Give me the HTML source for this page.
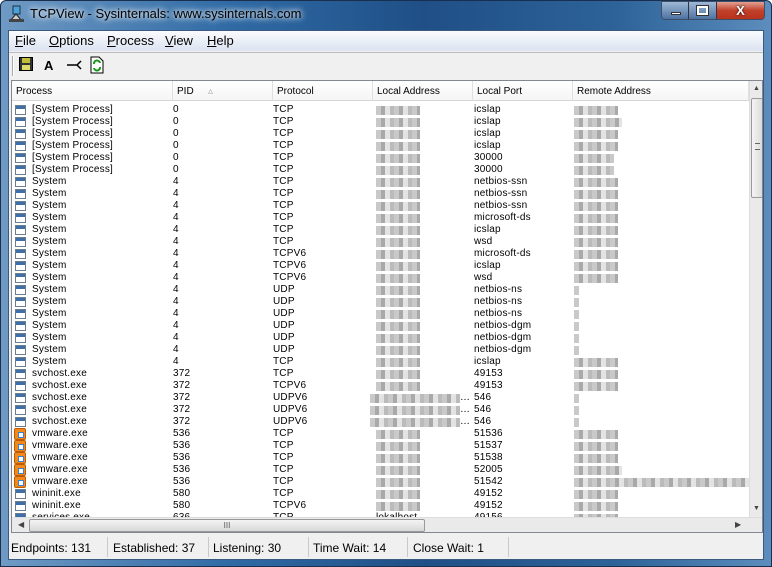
<!DOCTYPE html>
<html><head><meta charset="utf-8"><style>
*{margin:0;padding:0;box-sizing:border-box}
body{width:772px;height:567px;overflow:hidden;font-family:"Liberation Sans",sans-serif;background:#fff;position:relative}
.frame{position:absolute;left:0;top:0;width:772px;height:567px;background:linear-gradient(90deg,#6f9ac4 0%,#2f6aa5 30%,#1f4f86 55%,#2d6399 80%,#5c8dbd 100%);border:1px solid #1a2f4d;border-radius:6px 6px 0 0}
.title{position:absolute;left:30px;top:6px;font-size:13px;color:#000;text-shadow:0 0 8px #fff,0 0 6px #fff}
.btns{position:absolute;left:661px;top:1px;width:104px;height:19px;border:1px solid #3a4e6a;border-radius:0 0 4px 4px;overflow:hidden;display:flex}
.btns div{height:100%}
.client{position:absolute;left:8px;top:30px;width:756px;height:530px;background:#f0f0f0;border:1px solid #3c5a80}
.menu{position:absolute;left:0;top:0;width:754px;height:20px;background:linear-gradient(#fafbfd,#dbe3f1);font-size:13px}
.menu span{position:absolute;top:2px}
.tb{position:absolute;left:0;top:21px;width:754px;height:26px;border-top:1px solid #bbb;background:#f0f0f0}
.list{position:absolute;left:2px;top:49px;width:752px;height:453px;background:#fff;border:1px solid #828790;overflow:hidden}
.hdr{position:absolute;left:0;top:0;width:737px;height:20px;background:linear-gradient(#fff,#f5f5f5);border-bottom:1px solid #d5d5d5;font-size:10px;z-index:2}
.hdr span{position:absolute;top:5px}
.hdr i{position:absolute;top:0;width:1px;height:20px;background:#e0e0e0}
.r{position:absolute;left:0;width:737px;height:12px;font-size:10px;line-height:12px;letter-spacing:.2px;margin-top:3px}
.r span{position:absolute;top:0;white-space:nowrap}
.ic{position:absolute;left:3px;top:1px;width:11px;height:10px;border:1px solid #6b7c8f;background:linear-gradient(#3e6fa8 0 3px,#fff 3px)}
.vm{position:absolute;left:2px;top:0;width:12px;height:12px;border-radius:2px;background:#f08a1c;border:1px solid #c05a00}
.vm:after{content:"";position:absolute;left:3px;top:3px;width:4px;height:4px;background:#fff;border:1px solid #3a7fd0}
.b{position:absolute;top:2px;height:9px;background:repeating-linear-gradient(90deg,#c9c9c9 0 5px,#a9a9a9 5px 9px,#e3e3e3 9px 14px,#bbb 14px 18px)}
.vs{position:absolute;left:737px;top:0;width:15px;height:436px;background:#eaeaea;border-left:1px solid #ddd;z-index:3}
.hs{position:absolute;left:0;top:436px;width:752px;height:16px;background:#eaeaea;border-top:1px solid #ddd;z-index:3}
.status{position:absolute;left:0;top:504px;width:754px;height:24px;font-size:12px}
.status span{position:absolute;top:6px}
.status i{position:absolute;top:2px;width:1px;height:20px;background:#c9c9c9}
</style></head><body>
<div class="frame"></div>
<svg style="position:absolute;left:8px;top:5px" width="18" height="18"><rect x="5" y="1" width="7" height="8" fill="#4aa3d8" stroke="#234" stroke-width="1"/><path d="M2 16 L8 9 L14 16 Z" fill="#ccc" stroke="#222"/><rect x="1" y="14" width="15" height="3" fill="#444"/></svg>
<div class="title">TCPView - Sysinternals: www.sysinternals.com</div>
<div class="btns"><div style="width:28px;background:linear-gradient(#9fb8d6,#4e73a2);border-right:1px solid #334;position:relative"><b style="position:absolute;left:9px;top:10px;width:10px;height:3px;background:#fff;border:1px solid #333"></b></div><div style="width:28px;background:linear-gradient(#9fb8d6,#4e73a2);border-right:1px solid #334;position:relative"><b style="position:absolute;left:8px;top:4px;width:11px;height:9px;border:2px solid #fff;outline:1px solid #333"></b></div><div style="width:48px;background:linear-gradient(#e4a294,#c2402a 50%,#b8321c);color:#fff;font-weight:bold;font-size:13px;text-align:center;line-height:18px;text-shadow:0 0 2px #000">X</div></div>
<div class="client">
<div class="menu"><span style="left:6px"><u>F</u>ile</span><span style="left:40px"><u>O</u>ptions</span><span style="left:98px"><u>P</u>rocess</span><span style="left:156px"><u>V</u>iew</span><span style="left:198px"><u>H</u>elp</span></div>
<div class="tb">
<div style="position:absolute;left:3px;top:3px;width:2px;height:20px;border-left:1px solid #aaa;border-right:1px solid #fff"></div>
<svg style="position:absolute;left:10px;top:4px" width="14" height="14"><rect x="0.5" y="0.5" width="13" height="13" fill="#333" stroke="#000"/><rect x="3" y="1" width="8" height="5" fill="#bfbf3a"/><rect x="3" y="8" width="8" height="5" fill="#dcdc6a"/></svg>
<div style="position:absolute;left:35px;top:5px;font-weight:bold;font-size:13px">A</div>
<svg style="position:absolute;left:57px;top:6px" width="16" height="12"><path d="M1 6 H11 M11 6 L15 2 M11 6 L15 10" stroke="#000" stroke-width="1.5" fill="none"/></svg>
<svg style="position:absolute;left:81px;top:3px" width="14" height="18"><path d="M1 1 H9 L13 5 V17 H1 Z" fill="#fff" stroke="#000"/><path d="M4 8 A3 3 0 0 1 10 7 M10 11 A3 3 0 0 1 4 12" stroke="#1a9a1a" stroke-width="2" fill="none"/></svg>
</div>
<div class="list">
<div class="hdr"><span style="left:4px">Process</span><i style="left:160px"></i><span style="left:165px">PID</span><span style="left:196px;color:#aaa">▵</span><i style="left:260px"></i><span style="left:265px">Protocol</span><i style="left:360px"></i><span style="left:365px">Local Address</span><i style="left:460px"></i><span style="left:465px">Local Port</span><i style="left:560px"></i><span style="left:565px">Remote Address</span><i style="left:736px"></i></div>
<div class="r" style="top:20px"><i class="ic"></i><span style="left:20px">[System Process]</span><span style="left:161px">0</span><span style="left:261px">TCP</span><b class="b" style="left:364px;width:44px"></b><span style="left:462px">icslap</span><b class="b" style="left:562px;width:44px"></b></div>
<div class="r" style="top:32px"><i class="ic"></i><span style="left:20px">[System Process]</span><span style="left:161px">0</span><span style="left:261px">TCP</span><b class="b" style="left:364px;width:44px"></b><span style="left:462px">icslap</span><b class="b" style="left:562px;width:48px"></b></div>
<div class="r" style="top:44px"><i class="ic"></i><span style="left:20px">[System Process]</span><span style="left:161px">0</span><span style="left:261px">TCP</span><b class="b" style="left:364px;width:44px"></b><span style="left:462px">icslap</span><b class="b" style="left:562px;width:44px"></b></div>
<div class="r" style="top:56px"><i class="ic"></i><span style="left:20px">[System Process]</span><span style="left:161px">0</span><span style="left:261px">TCP</span><b class="b" style="left:364px;width:44px"></b><span style="left:462px">icslap</span><b class="b" style="left:562px;width:44px"></b></div>
<div class="r" style="top:68px"><i class="ic"></i><span style="left:20px">[System Process]</span><span style="left:161px">0</span><span style="left:261px">TCP</span><b class="b" style="left:364px;width:44px"></b><span style="left:462px">30000</span><b class="b" style="left:562px;width:40px"></b></div>
<div class="r" style="top:80px"><i class="ic"></i><span style="left:20px">[System Process]</span><span style="left:161px">0</span><span style="left:261px">TCP</span><b class="b" style="left:364px;width:44px"></b><span style="left:462px">30000</span><b class="b" style="left:562px;width:40px"></b></div>
<div class="r" style="top:92px"><i class="ic"></i><span style="left:20px">System</span><span style="left:161px">4</span><span style="left:261px">TCP</span><b class="b" style="left:364px;width:44px"></b><span style="left:462px">netbios-ssn</span><b class="b" style="left:562px;width:44px"></b></div>
<div class="r" style="top:104px"><i class="ic"></i><span style="left:20px">System</span><span style="left:161px">4</span><span style="left:261px">TCP</span><b class="b" style="left:364px;width:44px"></b><span style="left:462px">netbios-ssn</span><b class="b" style="left:562px;width:44px"></b></div>
<div class="r" style="top:116px"><i class="ic"></i><span style="left:20px">System</span><span style="left:161px">4</span><span style="left:261px">TCP</span><b class="b" style="left:364px;width:44px"></b><span style="left:462px">netbios-ssn</span><b class="b" style="left:562px;width:44px"></b></div>
<div class="r" style="top:128px"><i class="ic"></i><span style="left:20px">System</span><span style="left:161px">4</span><span style="left:261px">TCP</span><b class="b" style="left:364px;width:44px"></b><span style="left:462px">microsoft-ds</span><b class="b" style="left:562px;width:44px"></b></div>
<div class="r" style="top:140px"><i class="ic"></i><span style="left:20px">System</span><span style="left:161px">4</span><span style="left:261px">TCP</span><b class="b" style="left:364px;width:44px"></b><span style="left:462px">icslap</span><b class="b" style="left:562px;width:44px"></b></div>
<div class="r" style="top:152px"><i class="ic"></i><span style="left:20px">System</span><span style="left:161px">4</span><span style="left:261px">TCP</span><b class="b" style="left:364px;width:44px"></b><span style="left:462px">wsd</span><b class="b" style="left:562px;width:44px"></b></div>
<div class="r" style="top:164px"><i class="ic"></i><span style="left:20px">System</span><span style="left:161px">4</span><span style="left:261px">TCPV6</span><b class="b" style="left:364px;width:44px"></b><span style="left:462px">microsoft-ds</span><b class="b" style="left:562px;width:44px"></b></div>
<div class="r" style="top:176px"><i class="ic"></i><span style="left:20px">System</span><span style="left:161px">4</span><span style="left:261px">TCPV6</span><b class="b" style="left:364px;width:44px"></b><span style="left:462px">icslap</span><b class="b" style="left:562px;width:44px"></b></div>
<div class="r" style="top:188px"><i class="ic"></i><span style="left:20px">System</span><span style="left:161px">4</span><span style="left:261px">TCPV6</span><b class="b" style="left:364px;width:44px"></b><span style="left:462px">wsd</span><b class="b" style="left:562px;width:44px"></b></div>
<div class="r" style="top:200px"><i class="ic"></i><span style="left:20px">System</span><span style="left:161px">4</span><span style="left:261px">UDP</span><b class="b" style="left:364px;width:44px"></b><span style="left:462px">netbios-ns</span><b class="b" style="left:562px;width:5px"></b></div>
<div class="r" style="top:212px"><i class="ic"></i><span style="left:20px">System</span><span style="left:161px">4</span><span style="left:261px">UDP</span><b class="b" style="left:364px;width:44px"></b><span style="left:462px">netbios-ns</span><b class="b" style="left:562px;width:5px"></b></div>
<div class="r" style="top:224px"><i class="ic"></i><span style="left:20px">System</span><span style="left:161px">4</span><span style="left:261px">UDP</span><b class="b" style="left:364px;width:44px"></b><span style="left:462px">netbios-ns</span><b class="b" style="left:562px;width:5px"></b></div>
<div class="r" style="top:236px"><i class="ic"></i><span style="left:20px">System</span><span style="left:161px">4</span><span style="left:261px">UDP</span><b class="b" style="left:364px;width:44px"></b><span style="left:462px">netbios-dgm</span><b class="b" style="left:562px;width:5px"></b></div>
<div class="r" style="top:248px"><i class="ic"></i><span style="left:20px">System</span><span style="left:161px">4</span><span style="left:261px">UDP</span><b class="b" style="left:364px;width:44px"></b><span style="left:462px">netbios-dgm</span><b class="b" style="left:562px;width:5px"></b></div>
<div class="r" style="top:260px"><i class="ic"></i><span style="left:20px">System</span><span style="left:161px">4</span><span style="left:261px">UDP</span><b class="b" style="left:364px;width:44px"></b><span style="left:462px">netbios-dgm</span><b class="b" style="left:562px;width:5px"></b></div>
<div class="r" style="top:272px"><i class="ic"></i><span style="left:20px">System</span><span style="left:161px">4</span><span style="left:261px">TCP</span><b class="b" style="left:364px;width:44px"></b><span style="left:462px">icslap</span><b class="b" style="left:562px;width:44px"></b></div>
<div class="r" style="top:284px"><i class="ic"></i><span style="left:20px">svchost.exe</span><span style="left:161px">372</span><span style="left:261px">TCP</span><b class="b" style="left:364px;width:44px"></b><span style="left:462px">49153</span><b class="b" style="left:562px;width:44px"></b></div>
<div class="r" style="top:296px"><i class="ic"></i><span style="left:20px">svchost.exe</span><span style="left:161px">372</span><span style="left:261px">TCPV6</span><b class="b" style="left:364px;width:44px"></b><span style="left:462px">49153</span><b class="b" style="left:562px;width:44px"></b></div>
<div class="r" style="top:308px"><i class="ic"></i><span style="left:20px">svchost.exe</span><span style="left:161px">372</span><span style="left:261px">UDPV6</span><b class="b" style="left:358px;width:90px"></b><span style="left:448px">…</span><span style="left:462px">546</span><b class="b" style="left:562px;width:5px"></b></div>
<div class="r" style="top:320px"><i class="ic"></i><span style="left:20px">svchost.exe</span><span style="left:161px">372</span><span style="left:261px">UDPV6</span><b class="b" style="left:358px;width:90px"></b><span style="left:448px">…</span><span style="left:462px">546</span><b class="b" style="left:562px;width:5px"></b></div>
<div class="r" style="top:332px"><i class="ic"></i><span style="left:20px">svchost.exe</span><span style="left:161px">372</span><span style="left:261px">UDPV6</span><b class="b" style="left:358px;width:90px"></b><span style="left:448px">…</span><span style="left:462px">546</span><b class="b" style="left:562px;width:5px"></b></div>
<div class="r" style="top:344px"><i class="vm"></i><span style="left:20px">vmware.exe</span><span style="left:161px">536</span><span style="left:261px">TCP</span><b class="b" style="left:364px;width:44px"></b><span style="left:462px">51536</span><b class="b" style="left:562px;width:44px"></b></div>
<div class="r" style="top:356px"><i class="vm"></i><span style="left:20px">vmware.exe</span><span style="left:161px">536</span><span style="left:261px">TCP</span><b class="b" style="left:364px;width:44px"></b><span style="left:462px">51537</span><b class="b" style="left:562px;width:44px"></b></div>
<div class="r" style="top:368px"><i class="vm"></i><span style="left:20px">vmware.exe</span><span style="left:161px">536</span><span style="left:261px">TCP</span><b class="b" style="left:364px;width:44px"></b><span style="left:462px">51538</span><b class="b" style="left:562px;width:44px"></b></div>
<div class="r" style="top:380px"><i class="vm"></i><span style="left:20px">vmware.exe</span><span style="left:161px">536</span><span style="left:261px">TCP</span><b class="b" style="left:364px;width:44px"></b><span style="left:462px">52005</span><b class="b" style="left:562px;width:48px"></b></div>
<div class="r" style="top:392px"><i class="vm"></i><span style="left:20px">vmware.exe</span><span style="left:161px">536</span><span style="left:261px">TCP</span><b class="b" style="left:364px;width:44px"></b><span style="left:462px">51542</span><b class="b" style="left:562px;width:175px"></b></div>
<div class="r" style="top:404px"><i class="ic"></i><span style="left:20px">wininit.exe</span><span style="left:161px">580</span><span style="left:261px">TCP</span><b class="b" style="left:364px;width:44px"></b><span style="left:462px">49152</span><b class="b" style="left:562px;width:44px"></b></div>
<div class="r" style="top:416px"><i class="ic"></i><span style="left:20px">wininit.exe</span><span style="left:161px">580</span><span style="left:261px">TCPV6</span><b class="b" style="left:364px;width:44px"></b><span style="left:462px">49152</span><b class="b" style="left:562px;width:44px"></b></div>
<div class="r" style="top:428px"><i class="ic"></i><span style="left:20px">services.exe</span><span style="left:161px">636</span><span style="left:261px">TCP</span><span style="left:364px">lokalhost</span><span style="left:462px">49156</span><b class="b" style="left:562px;width:44px"></b></div>
<div class="vs"><div style="position:absolute;left:3px;top:4px;font-size:7px;color:#444">▲</div><div style="position:absolute;left:1px;top:17px;width:12px;height:100px;background:linear-gradient(90deg,#f4f4f4,#dcdcdc);border:1px solid #999;border-radius:2px"><div style="position:absolute;left:3px;top:44px;width:5px;height:7px;border-top:1px solid #666;border-bottom:1px solid #666"></div></div><div style="position:absolute;left:3px;top:424px;font-size:7px;color:#444">▼</div></div>
<div class="hs"><div style="position:absolute;left:6px;top:2px;font-size:8px;color:#444">◀</div><div style="position:absolute;left:17px;top:1px;width:396px;height:13px;background:linear-gradient(#f4f4f4,#d8d8d8);border:1px solid #999;border-radius:2px;text-align:center;font-size:8px;line-height:11px;color:#555">III</div><div style="position:absolute;left:723px;top:2px;font-size:8px;color:#444">▶</div></div>
</div>
<div class="status"><span style="left:2px">Endpoints: 131</span><i style="left:98px"></i><span style="left:104px">Established: 37</span><i style="left:199px"></i><span style="left:204px">Listening: 30</span><i style="left:299px"></i><span style="left:304px">Time Wait: 14</span><i style="left:398px"></i><span style="left:404px">Close Wait: 1</span><i style="left:499px"></i></div>
</div>
</body></html>
